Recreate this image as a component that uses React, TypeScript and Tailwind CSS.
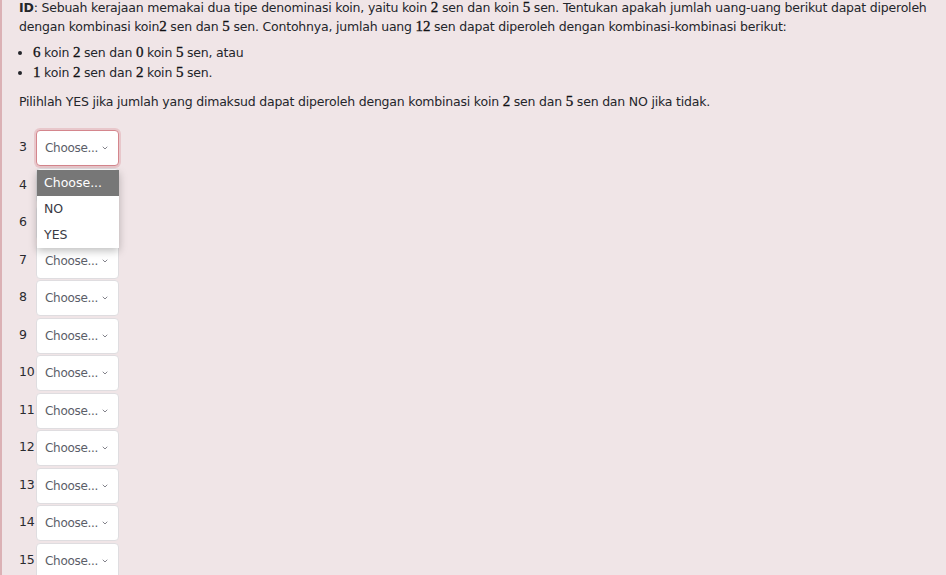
import { ChevronDown } from 'lucide-react';

const rows = [3, 4, 6, 7, 8, 9, 10, 11, 12, 13, 14, 15];

function M({ children }: { children: React.ReactNode }) {
  return (
    <span className="font-['Liberation_Serif',serif] text-[15px] leading-none text-[#111114] [-webkit-text-stroke:0.3px_#111114]">{children}</span>
  );
}

function SelectBox({ focused }: { focused?: boolean }) {
  return (
    <div
      className={
        'flex items-center h-[36px] w-[83px] pl-[8px] pr-[9px] bg-white rounded-[4px] border ' +
        (focused
          ? 'border-[#d4868d] shadow-[0_0_0_2px_rgba(214,130,138,0.3)]'
          : 'border-[#dfdde0]')
      }
    >
      <span className="text-[12px] text-[#5b5e68] tracking-[-0.3px]">Choose...</span>
      <ChevronDown className="ml-auto w-[8px] h-[8px] text-[#6b6b75]" strokeWidth={2.5} />
    </div>
  );
}

export default function App() {
  return (
    <div className="min-h-screen bg-[#f0e5e7] border-l-[2px] border-[#dbb1b5] font-['DejaVu_Sans',sans-serif] text-[#24262b] overflow-hidden">
      <div className="pl-[17px] pr-4">
        <p className="-mt-[2px] text-[12.5px] leading-[19px] tracking-[-0.2px]">
          <b className="font-bold">ID</b>: Sebuah kerajaan memakai dua tipe denominasi koin, yaitu koin <M>2</M> sen dan koin <M>5</M> sen. Tentukan apakah jumlah uang-uang berikut dapat diperoleh dengan kombinasi koin<M>2</M> sen dan <M>5</M> sen. Contohnya, jumlah uang <M>12</M> sen dapat diperoleh dengan kombinasi-kombinasi berikut:
        </p>
        <ul className="mt-[7px] text-[12.5px] leading-[19.5px] tracking-[-0.2px] list-disc pl-[14px]">
          <li><M>6</M> koin <M>2</M> sen dan <M>0</M> koin <M>5</M> sen, atau</li>
          <li><M>1</M> koin <M>2</M> sen dan <M>2</M> koin <M>5</M> sen.</li>
        </ul>
        <p className="mt-[10px] text-[12.5px] leading-[19px] tracking-[-0.2px]">
          Pilihlah YES jika jumlah yang dimaksud dapat diperoleh dengan kombinasi koin <M>2</M> sen dan <M>5</M> sen dan NO jika tidak.
        </p>

        <div className="mt-[19px] flex flex-col gap-[1.5px]">
          {rows.map((n, i) => (
            <div key={n} className="relative flex items-start">
              <span className="w-[17px] pt-[8px] text-[12.5px] text-[#2a2a2f] tracking-[-0.3px]">{n}</span>
              <SelectBox focused={i === 0} />
              {i === 0 && (
                <div className="absolute z-10 left-[18px] top-[40px] w-[82px] bg-white shadow-[0_3px_8px_rgba(0,0,0,0.25)] text-[12.5px]">
                  <div className="h-[26px] flex items-center px-[7px] bg-[#777777] text-white">Choose...</div>
                  <div className="h-[26px] flex items-center px-[7px] text-[#3a3a44]">NO</div>
                  <div className="h-[26px] flex items-center px-[7px] text-[#3a3a44]">YES</div>
                </div>
              )}
            </div>
          ))}
        </div>
      </div>
    </div>
  );
}
